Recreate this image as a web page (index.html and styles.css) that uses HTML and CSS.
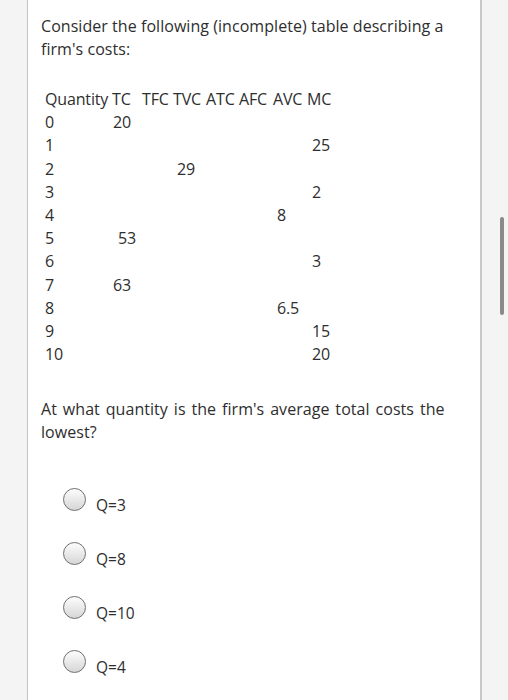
FILE: index.html
```html
<!DOCTYPE html>
<html>
<head>
<meta charset="utf-8">
<link rel="stylesheet" href="styles.css">
</head>
<body>
<div class="page">
  <div class="side"></div>
  <main class="card">
    <p class="para">Consider the following (incomplete) table describing a firm's costs:</p>
    <div class="tbl">
      <div class="row"><span>Quantity</span><span>TC</span><span>TFC</span><span>TVC</span><span>ATC</span><span>AFC</span><span>AVC</span><span>MC</span></div>
      <div class="row"><span>0</span><span class="o5">20</span></div>
      <div class="row"><span>1</span><span class="c8 o5">25</span></div>
      <div class="row"><span>2</span><span class="c4 o4">29</span></div>
      <div class="row"><span>3</span><span class="c8 o5">2</span></div>
      <div class="row"><span>4</span><span class="c7 o4">8</span></div>
      <div class="row"><span>5</span><span class="o10">53</span></div>
      <div class="row"><span>6</span><span class="c8 o5">3</span></div>
      <div class="row"><span>7</span><span class="o5">63</span></div>
      <div class="row"><span>8</span><span class="c7 o4">6.5</span></div>
      <div class="row"><span>9</span><span class="c8 o5">15</span></div>
      <div class="row"><span>10</span><span class="c8 o5">20</span></div>
    </div>
    <p class="para para2">At what quantity is the firm's average total costs the lowest?</p>
    <ul class="opts">
      <li class="opt"><span class="radio"></span><span class="lbl">Q=3</span></li>
      <li class="opt"><span class="radio"></span><span class="lbl">Q=8</span></li>
      <li class="opt"><span class="radio"></span><span class="lbl">Q=10</span></li>
      <li class="opt"><span class="radio"></span><span class="lbl">Q=4</span></li>
    </ul>
  </main>
  <div class="gutter"><div class="thumb"></div></div>
</div>
</body>
</html>
```

FILE: styles.css
```css
html, body {
  margin: 0;
  padding: 0;
}
body {
  font-family: "Open Sans", "Liberation Sans", sans-serif;
  font-size: 16px;
  color: #2e2e2e;
  background: #f4f4f4;
}
.page {
  display: flex;
  height: 700px;
  overflow: hidden;
  background: #f4f4f4;
}
.side {
  width: 27px;
  flex: none;
}
.card {
  flex: none;
  width: 439px;
  background: #fff;
  border-left: 1px solid #c4c4c4;
  border-right: 2px solid #c8c8c8;
  padding: 15px 0 0 13px;
  box-sizing: content-box;
}
.para {
  margin: 0;
  line-height: 23px;
  letter-spacing: 0.05px;
}
.tbl {
  margin: 27px 0 0 4px;
  letter-spacing: -0.15px;
}
.row {
  display: grid;
  grid-template-columns: 67px 30px 31px 33px 33px 34px 34px auto;
  line-height: 23.2px;
  height: 23.2px;
  white-space: nowrap;
}
.c4 { grid-column: 4; }
.c7 { grid-column: 7; }
.c8 { grid-column: 8; }
.o4 { padding-left: 4px; }
.o5 { padding-left: 1px; }
.c8.o5 { padding-left: 5px; }
.o10 { padding-left: 6px; }
.para2 {
  margin-top: 32px;
  word-spacing: 1.7px;
}
.opts {
  list-style: none;
  margin: 44px 0 0 22px;
  padding: 0;
}
.opt {
  display: flex;
  align-items: flex-start;
  height: 54px;
}
.radio {
  width: 21px;
  height: 21px;
  border-radius: 50%;
  border: 1.5px solid #6f6f6f;
  background: linear-gradient(#fdfdfd, #d6d6d6);
  flex: none;
}
.lbl {
  margin-left: 10px;
  padding-top: 5px;
  line-height: 24px;
  font-size: 15.5px;
}
.gutter {
  flex: 1;
  padding-top: 217px;
}
.thumb {
  width: 4px;
  height: 98px;
  margin-left: 18px;
  background: #8a8a8a;
  border-radius: 2px;
}
```
